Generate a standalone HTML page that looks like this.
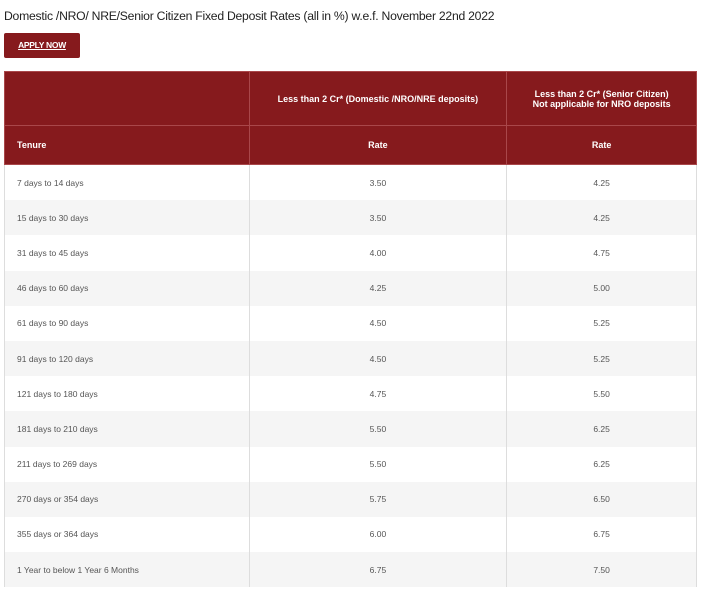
<!DOCTYPE html>
<html><head><meta charset="utf-8"><style>
body{margin:0;background:#fff;font-family:"Liberation Sans",sans-serif;width:703px;height:592px;overflow:hidden;position:relative}
.title{position:absolute;left:4px;top:9px;font-size:12.2px;color:#222;letter-spacing:-0.25px}
.btn{position:absolute;left:4px;top:33px;width:76px;height:25px;background:#861a1d;border-radius:2px;color:#fff;font-size:8.5px;font-weight:bold;text-decoration:underline;line-height:25px;text-align:center;letter-spacing:-0.3px}
table{position:absolute;left:4px;top:71px;width:693px;border-collapse:collapse;font-size:8.5px;color:#555}
th{background:#861a1d;color:#fff;font-weight:bold;border:1px solid #a9474a;font-size:9px}
th,td{padding:0 12px}
tr.h1 th{height:53px}
tr.h2 th{height:38px}
td{height:35.2px;border-left:1px solid #ddd;border-right:1px solid #ddd}
td+td{text-align:center}
tr:nth-child(even) td{background:#f5f5f5}
</style></head><body>
<div class="title">Domestic /NRO/ NRE/Senior Citizen Fixed Deposit Rates (all in %) w.e.f. November 22nd 2022</div>
<div class="btn">APPLY NOW</div>
<table>
<colgroup><col style="width:245px"><col style="width:258px"><col style="width:190px"></colgroup>
<thead>
<tr class="h1"><th></th><th>Less than 2 Cr* (Domestic /NRO/NRE deposits)</th><th>Less than 2 Cr* (Senior Citizen)<br>Not applicable for NRO deposits</th></tr>
<tr class="h2"><th style="text-align:left">Tenure</th><th>Rate</th><th>Rate</th></tr>
</thead>
<tbody>
<tr><td>7 days to 14 days</td><td>3.50</td><td>4.25</td></tr>
<tr><td>15 days to 30 days</td><td>3.50</td><td>4.25</td></tr>
<tr><td>31 days to 45 days</td><td>4.00</td><td>4.75</td></tr>
<tr><td>46 days to 60 days</td><td>4.25</td><td>5.00</td></tr>
<tr><td>61 days to 90 days</td><td>4.50</td><td>5.25</td></tr>
<tr><td>91 days to 120 days</td><td>4.50</td><td>5.25</td></tr>
<tr><td>121 days to 180 days</td><td>4.75</td><td>5.50</td></tr>
<tr><td>181 days to 210 days</td><td>5.50</td><td>6.25</td></tr>
<tr><td>211 days to 269 days</td><td>5.50</td><td>6.25</td></tr>
<tr><td>270 days or 354 days</td><td>5.75</td><td>6.50</td></tr>
<tr><td>355 days or 364 days</td><td>6.00</td><td>6.75</td></tr>
<tr><td>1 Year to below 1 Year 6 Months</td><td>6.75</td><td>7.50</td></tr>
</tbody>
</table>
</body></html>
